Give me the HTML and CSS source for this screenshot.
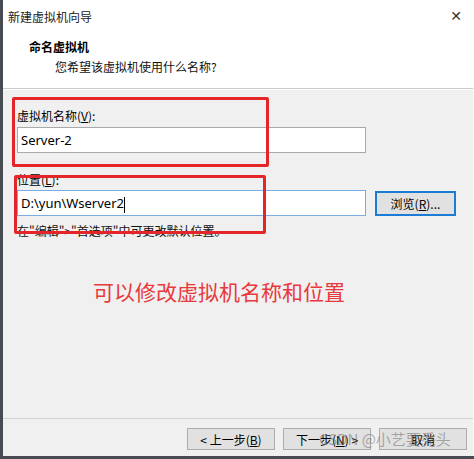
FILE: index.html
```html
<!DOCTYPE html>
<html lang="zh-CN">
<head>
<meta charset="UTF-8" />
<title>新建虚拟机向导</title>
<link rel="stylesheet" href="styles.css">
</head>
<body>
<div class="window">
  <div class="titlebar">
    <span class="title">新建虚拟机向导</span>
    <span class="close">✕</span>
  </div>
  <div class="header">
    <p class="step">命名虚拟机</p>
    <p class="question">您希望该虚拟机使用什么名称?</p>
  </div>

  <div class="content">
    <label class="label first">虚拟机名称(<u>V</u>):</label>
    <div class="field">Server-2</div>

    <label class="label second">位置(<u>L</u>):</label>
    <div class="row">
      <div class="field active">D:\yun\Wserver2<span class="caret"></span></div>
      <button class="btn browse">浏览(<u>R</u>)...</button>
    </div>
    <p class="note">在"编辑">"首选项"中可更改默认位置。</p>

    <p class="tip">可以修改虚拟机名称和位置</p>
  </div>

  <div class="footer">
    <button class="btn">&lt; 上一步(<u>B</u>)</button>
    <button class="btn">下一步(<u>N</u>) &gt;</button>
    <button class="btn">取消</button>
  </div>

  <!-- 红框标注 -->
  <div class="mark mark-name"></div>
  <div class="mark mark-path"></div>
  <span class="watermark">CSDN @小艺要秃头</span>
</div>
</body>
</html>
```

FILE: styles.css
```css
html, body {
  margin: 0;
  padding: 0;
}
body {
  background: #474c53;
  font-family: "Microsoft YaHei", "Noto Sans CJK SC", sans-serif;
  font-size: 12px;
  color: #000;
}
.window {
  position: relative;
  width: 471px;
  height: 456px;
  margin-left: 3px;
  background: #f0f0f0;
  border-right: 1px solid #fafafa;
  box-sizing: border-box;
  display: flex;
  flex-direction: column;
}
.titlebar {
  height: 32px;
  background: #fff;
  display: flex;
  align-items: center;
  justify-content: space-between;
  padding: 0 10px 0 5px;
}
.title {
  color: #222;
}
.close {
  font-size: 14px;
  color: #333;
  font-family: "DejaVu Sans", sans-serif;
  margin-right: 1px;
}
.header {
  height: 56px;
  background: #fff;
  border-bottom: 1px solid #c9c9c9;
  box-shadow: 0 1px 0 #fff;
}
.header p {
  margin: 0;
  line-height: 16px;
}
.step {
  font-weight: bold;
  padding: 7px 0 0 26px;
}
.question {
  padding: 4px 0 0 52px;
  color: #111;
}
.content {
  flex: 1;
  padding: 0 14px;
}
.label {
  display: block;
  line-height: 16px;
}
.label.first { margin-top: 19px; }
.label.second { margin-top: 19px; }
.field {
  width: 349px;
  height: 26px;
  box-sizing: border-box;
  margin-top: 3px;
  background: #fff;
  border: 1px solid #a9a9a9;
  padding: 0 3px;
  font-size: 13px;
  line-height: 24px;
  font-family: "Segoe UI", "Noto Sans", "Noto Sans CJK SC", sans-serif;
}
.field.active {
  border-color: #7aaee0;
  margin-top: 2px;
}
.caret {
  display: inline-block;
  width: 1px;
  height: 16px;
  background: #000;
  vertical-align: middle;
}
.row {
  display: flex;
  align-items: flex-start;
  gap: 9px;
}
.btn {
  font-family: inherit;
  font-size: 12px;
  height: 22px;
  width: 88px;
  padding: 0;
  background: #e1e1e1;
  border: 1px solid #adadad;
  color: #000;
}
.browse {
  width: 81px;
  height: 25px;
  margin-top: 3px;
  border: 2px solid #1c7cd5;
}
.note {
  margin: 7px 0 0;
  line-height: 16px;
  color: #111;
}
.tip {
  margin: 38px 0 0 76px;
  font-size: 21px;
  line-height: 28px;
  color: #e8393c;
}
.footer {
  height: 38px;
  border-top: 1px solid #d2d2d2;
  display: flex;
  justify-content: flex-end;
  align-items: flex-start;
  gap: 8px;
  padding: 9px 6px 0 0;
  box-sizing: border-box;
}
.mark {
  position: absolute;
  border: 3px solid #e4262b;
  border-radius: 2px;
  box-sizing: border-box;
}
.mark-name {
  left: 9px;
  top: 97px;
  width: 257px;
  height: 70px;
}
.mark-path {
  left: 11px;
  top: 175px;
  width: 252px;
  height: 59px;
}
.watermark {
  position: absolute;
  left: 316px;
  top: 428px;
  font-size: 15px;
  color: rgba(110, 110, 110, 0.55);
  font-family: "Noto Sans CJK SC", sans-serif;
}
```
